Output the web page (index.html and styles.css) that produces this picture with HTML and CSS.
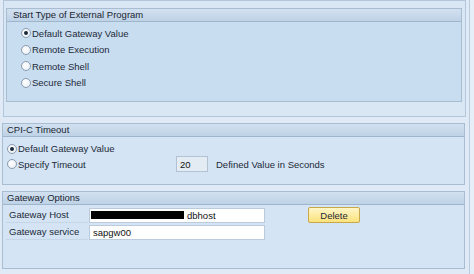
FILE: index.html
```html
<!DOCTYPE html>
<html lang="en">
<head>
  <meta charset="UTF-8" />
  <title>Gateway Settings</title>
  <link rel="stylesheet" href="styles.css">
</head>

<body>
<div class="screen">
  <main class="main">

    <!-- Program start type -->
    <div class="outer">
      <section class="group group-start">
        <div class="group-title">Start Type of External Program</div>
        <div class="group-body radio-list">
          <label class="radio"><span class="dot checked"></span>Default Gateway Value</label>
          <label class="radio"><span class="dot"></span>Remote Execution</label>
          <label class="radio"><span class="dot"></span>Remote Shell</label>
          <label class="radio"><span class="dot"></span>Secure Shell</label>
        </div>
      </section>
    </div>

    <!-- CPI-C timeout -->
    <section class="group group-cpic">
      <div class="group-title">CPI-C Timeout</div>
      <div class="group-body timeout-body">
        <label class="radio"><span class="dot checked"></span>Default Gateway Value</label>
        <div class="timeout-row">
          <label class="radio timeout-label"><span class="dot"></span>Specify Timeout</label>
          <span class="field field-small">20</span>
          <span class="hint">Defined Value in Seconds</span>
        </div>
      </div>
    </section>

    <!-- Gateway options -->
    <section class="group group-gateway">
      <div class="group-title">Gateway Options</div>
      <div class="group-body gateway-body">
        <div class="form-row">
          <span class="form-label">Gateway Host</span>
          <span class="field field-wide"><span class="redacted"></span>dbhost</span>
          <button class="btn-delete" type="button">Delete</button>
        </div>
        <div class="form-row">
          <span class="form-label">Gateway service</span>
          <span class="field field-wide">sapgw00</span>
        </div>
      </div>
    </section>

  </main>
  <div class="edge"></div>
</div>
</body>
</html>
```

FILE: styles.css
```css
body {
  margin: 0;
  background-color: #dfeaf6;
  color: #1c2a38;
  font-family: "Liberation Sans", Arial, sans-serif;
  font-size: 9.5px;
}

.screen {
  display: flex;
  height: 274px;
  overflow: hidden;
}

.main {
  width: 469px;
  border-right: 1px solid #b9cbdd;
  display: flex;
  flex-direction: column;
}

.edge {
  flex: 1;
  background-color: #e6eff8;
}

.outer {
  margin: 0 3px 0 3px;
  height: 117px;
  box-sizing: border-box;
  border: 1px solid #b3c6da;
  padding: 7px 3px 0 2px;
  background-color: #d9e7f4;
}

.group {
  border: 1px solid #a9bdd2;
  background-color: #d4e4f4;
}

.group-title {
  height: 12px;
  line-height: 12px;
  padding-left: 4px;
  border-bottom: 1px solid #9fb5cb;
  background: linear-gradient(#d2e1f0, #bed2e6);
  color: #1a2633;
}

.group-start {
  height: 94px;
  box-sizing: border-box;
  background-color: #c9ddf1;
}

.group-start .group-title {
  padding-left: 6px;
}

.radio-list {
  display: flex;
  flex-direction: column;
  padding: 3px 0 0 14px;
}

.radio {
  display: flex;
  align-items: center;
  height: 16.5px;
  gap: 1px;
}

.dot {
  width: 8px;
  height: 8px;
  border-radius: 50%;
  border: 1px solid #8b9bb0;
  background: radial-gradient(circle at 40% 40%, #ffffff, #e4eaf2);
  display: flex;
  align-items: center;
  justify-content: center;
}

.dot.checked::after {
  content: "";
  width: 4px;
  height: 4px;
  border-radius: 50%;
  background-color: #1b2a3a;
}

.group-cpic {
  margin: 6px 4px 0 2px;
  height: 62px;
  box-sizing: border-box;
}

.timeout-body {
  display: flex;
  flex-direction: column;
  padding: 4px 0 0 4px;
}

.timeout-body .radio {
  height: 15px;
}

.timeout-row {
  display: flex;
  align-items: center;
}

.timeout-label {
  width: 169px;
}

.field {
  display: flex;
  align-items: center;
  box-sizing: border-box;
  border: 1px solid #a7b9cc;
  background-color: #ffffff;
  padding-left: 3px;
  color: #111111;
}

.field-small {
  width: 32px;
  height: 16px;
  background-color: #e3ebf3;
  border-color: #b3c2d2;
}

.hint {
  margin-left: 8px;
}

.group-gateway {
  margin: 6px 4px 0 2px;
  height: 78px;
  box-sizing: border-box;
}

.gateway-body {
  display: flex;
  flex-direction: column;
  gap: 3px;
  padding: 3px 0 0 3px;
}

.form-row {
  display: flex;
  align-items: center;
  height: 14px;
}

.form-label {
  width: 79px;
  padding-left: 3px;
  line-height: 14px;
  border-bottom: 1px solid #c5d6e7;
  margin-right: 1px;
}

.field-wide {
  width: 176px;
  height: 15px;
  border-color: #bccbdb;
}

.redacted {
  width: 93px;
  height: 8px;
  margin: 0 3px 0 -2px;
  background-color: #000000;
}

.btn-delete {
  margin-left: 43px;
  width: 52px;
  height: 16px;
  padding: 0;
  border: 1px solid #c7a84a;
  border-radius: 2px;
  background: linear-gradient(#fff6c8, #fbe27c);
  font-family: inherit;
  font-size: 9.5px;
  color: #1c2a38;
}
```
